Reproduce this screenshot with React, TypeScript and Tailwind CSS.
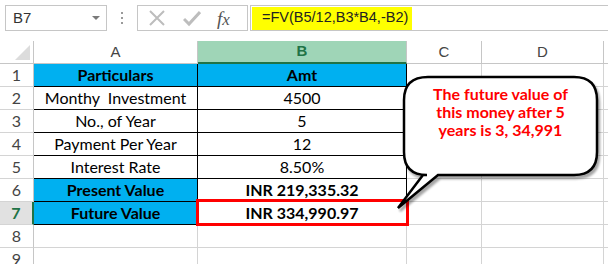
import React from "react";

type Cell = { text: string; bold?: boolean; blue?: boolean };

const rows: { a: Cell; b: Cell }[] = [
  { a: { text: "Particulars", bold: true, blue: true }, b: { text: "Amt", bold: true, blue: true } },
  { a: { text: "Monthy  Investment" }, b: { text: "4500" } },
  { a: { text: "No., of Year" }, b: { text: "5" } },
  { a: { text: "Payment Per Year" }, b: { text: "12" } },
  { a: { text: "Interest Rate" }, b: { text: "8.50%" } },
  { a: { text: "Present Value", bold: true, blue: true }, b: { text: "INR 219,335.32", bold: true } },
  { a: { text: "Future Value", bold: true, blue: true }, b: { text: "INR 334,990.97", bold: true } },
];

function FormulaBar() {
  return (
    <div className="flex h-[41px] items-start pt-[5px] font-['Liberation_Sans',sans-serif]">
      {/* name box */}
      <div className="ml-[5px] flex h-[26px] w-[102px] items-center justify-between border border-[#c6c6c6] pl-[7px] pr-[6px] text-[15px] text-[#333]">
        <span>B7</span>
        <span className="h-0 w-0 border-x-[4px] border-t-[4px] border-x-transparent border-t-[#7a7a7a]" />
      </div>
      {/* grip dots */}
      <div className="flex w-[30px] flex-col items-center gap-[3px] pt-[7px]">
        <span className="h-[2px] w-[2px] bg-[#9a9a9a]" />
        <span className="h-[2px] w-[2px] bg-[#9a9a9a]" />
        <span className="h-[2px] w-[2px] bg-[#9a9a9a]" />
      </div>
      {/* cancel / enter / fx */}
      <div className="flex h-[26px] w-[111px] items-center border border-[#c6c6c6] pl-[10px]">
        <svg width="18" height="18" viewBox="0 0 18 18" className="mr-[17px]">
          <path d="M2 2 L16 16 M16 2 L2 16" stroke="#bdbdbd" strokeWidth="2" fill="none" />
        </svg>
        <svg width="18" height="18" viewBox="0 0 18 18" className="mr-[16px]">
          <path d="M1 10 L6 15 L17 3" stroke="#bdbdbd" strokeWidth="3" fill="none" />
        </svg>
        <span className="font-['Liberation_Serif',serif] text-[19px] italic leading-none text-[#555]">
          f<span className="text-[17px]">x</span>
        </span>
      </div>
      {/* formula */}
      <div className="ml-[2px] flex h-[26px] flex-1 items-center border-y border-l border-[#c6c6c6] pl-[1px]">
        <span className="flex h-[23px] items-center bg-[#ffff00] pl-[10px] pr-[4px] text-[14.5px] text-[#222]">
          =FV(B5/12,B3*B4,-B2)
        </span>
      </div>
    </div>
  );
}

function ColumnHeaders() {
  return (
    <div className="flex h-[23px] font-['Liberation_Sans',sans-serif] text-[15px] text-[#444]">
      <div className="relative w-[34px] border-r border-b border-[#c6c6c6]">
        <span className="absolute bottom-[3px] right-[3px] h-0 w-0 border-b-[15px] border-l-[15px] border-b-[#dcdcdc] border-l-transparent" />
      </div>
      <div className="flex w-[164px] items-center justify-center border-r border-b border-[#c6c6c6]">A</div>
      <div className="flex w-[209px] items-center justify-center border-b-2 border-r border-b-[#217346] border-r-[#c6c6c6] bg-[#9fd5b7] font-bold text-[#217346]">
        B
      </div>
      <div className="flex w-[75px] items-center justify-center border-r border-b border-[#c6c6c6]">C</div>
      <div className="flex w-[122px] items-center justify-center border-r border-b border-[#c6c6c6]">D</div>
      <div className="flex-1 border-b border-[#c6c6c6]" />
    </div>
  );
}

function DataRow({ n, a, b }: { n: number; a?: Cell; b?: Cell }) {
  const selected = n === 7;
  const inTable = !!a;
  return (
    <div className="flex h-[23px] font-['Lato',sans-serif] text-[16px]">
      <div
        className={`flex w-[34px] items-center justify-center border-b border-[#d4d4d4] ${
          selected
            ? "border-r-2 border-r-[#217346] bg-[#e1e1e1] font-bold text-[#217346]"
            : "border-r border-r-[#c6c6c6] text-[#444]"
        }`}
      >
        {n}
      </div>
      <div
        className={`flex w-[164px] items-center justify-center whitespace-pre border-r border-b ${
          inTable ? "border-black" : "border-[#d4d4d4]"
        } ${a?.blue ? "bg-[#00b0f0]" : ""} ${a?.bold ? "font-bold" : ""} text-black`}
      >
        {a?.text}
      </div>
      <div
        className={`flex w-[209px] items-center justify-center border-r border-b ${
          inTable ? "border-black" : "border-[#d4d4d4]"
        } ${b?.blue ? "bg-[#00b0f0]" : ""} ${b?.bold ? "font-bold" : ""} text-black`}
      >
        {b?.text}
      </div>
      <div className="w-[75px] border-r border-b border-[#d4d4d4]" />
      <div className="w-[122px] border-r border-b border-[#d4d4d4]" />
      <div className="flex-1 border-b border-[#d4d4d4]" />
    </div>
  );
}

function Callout() {
  return (
    <div className="pointer-events-none absolute left-[392px] top-[72px] h-[145px] w-[214px]">
      <svg width="214" height="145" viewBox="0 0 214 145" className="absolute inset-0 drop-shadow-[2px_3px_1px_rgba(0,0,0,0.35)]">
        <path
          d="M36 5 H182 Q205 5 205 28 V80 Q205 103 182 103 H46 L6 136 L31 103 H35 Q12 103 12 80 V28 Q12 5 36 5 Z"
          fill="white"
          stroke="black"
          strokeWidth="2.5"
          strokeLinejoin="miter"
        />
      </svg>
      <div className="absolute left-[12px] top-[13px] w-[193px] text-center font-['Lato',sans-serif] text-[16px] font-bold leading-[18px] text-[#ff0000]">
        The future value of
        <br />
        this money after 5
        <br />
        years is 3, 34,991
      </div>
    </div>
  );
}

export default function App() {
  return (
    <div className="relative h-[264px] w-[608px] overflow-hidden bg-white">
      <FormulaBar />
      <ColumnHeaders />
      {[1, 2, 3, 4, 5, 6, 7, 8, 9].map((n) => (
        <DataRow key={n} n={n} a={rows[n - 1]?.a} b={rows[n - 1]?.b} />
      ))}
      {/* active cell outline */}
      <div className="pointer-events-none absolute left-[196px] top-[199px] h-[27px] w-[213px] border-[3px] border-[#ff0000]" />
      <Callout />
    </div>
  );
}
